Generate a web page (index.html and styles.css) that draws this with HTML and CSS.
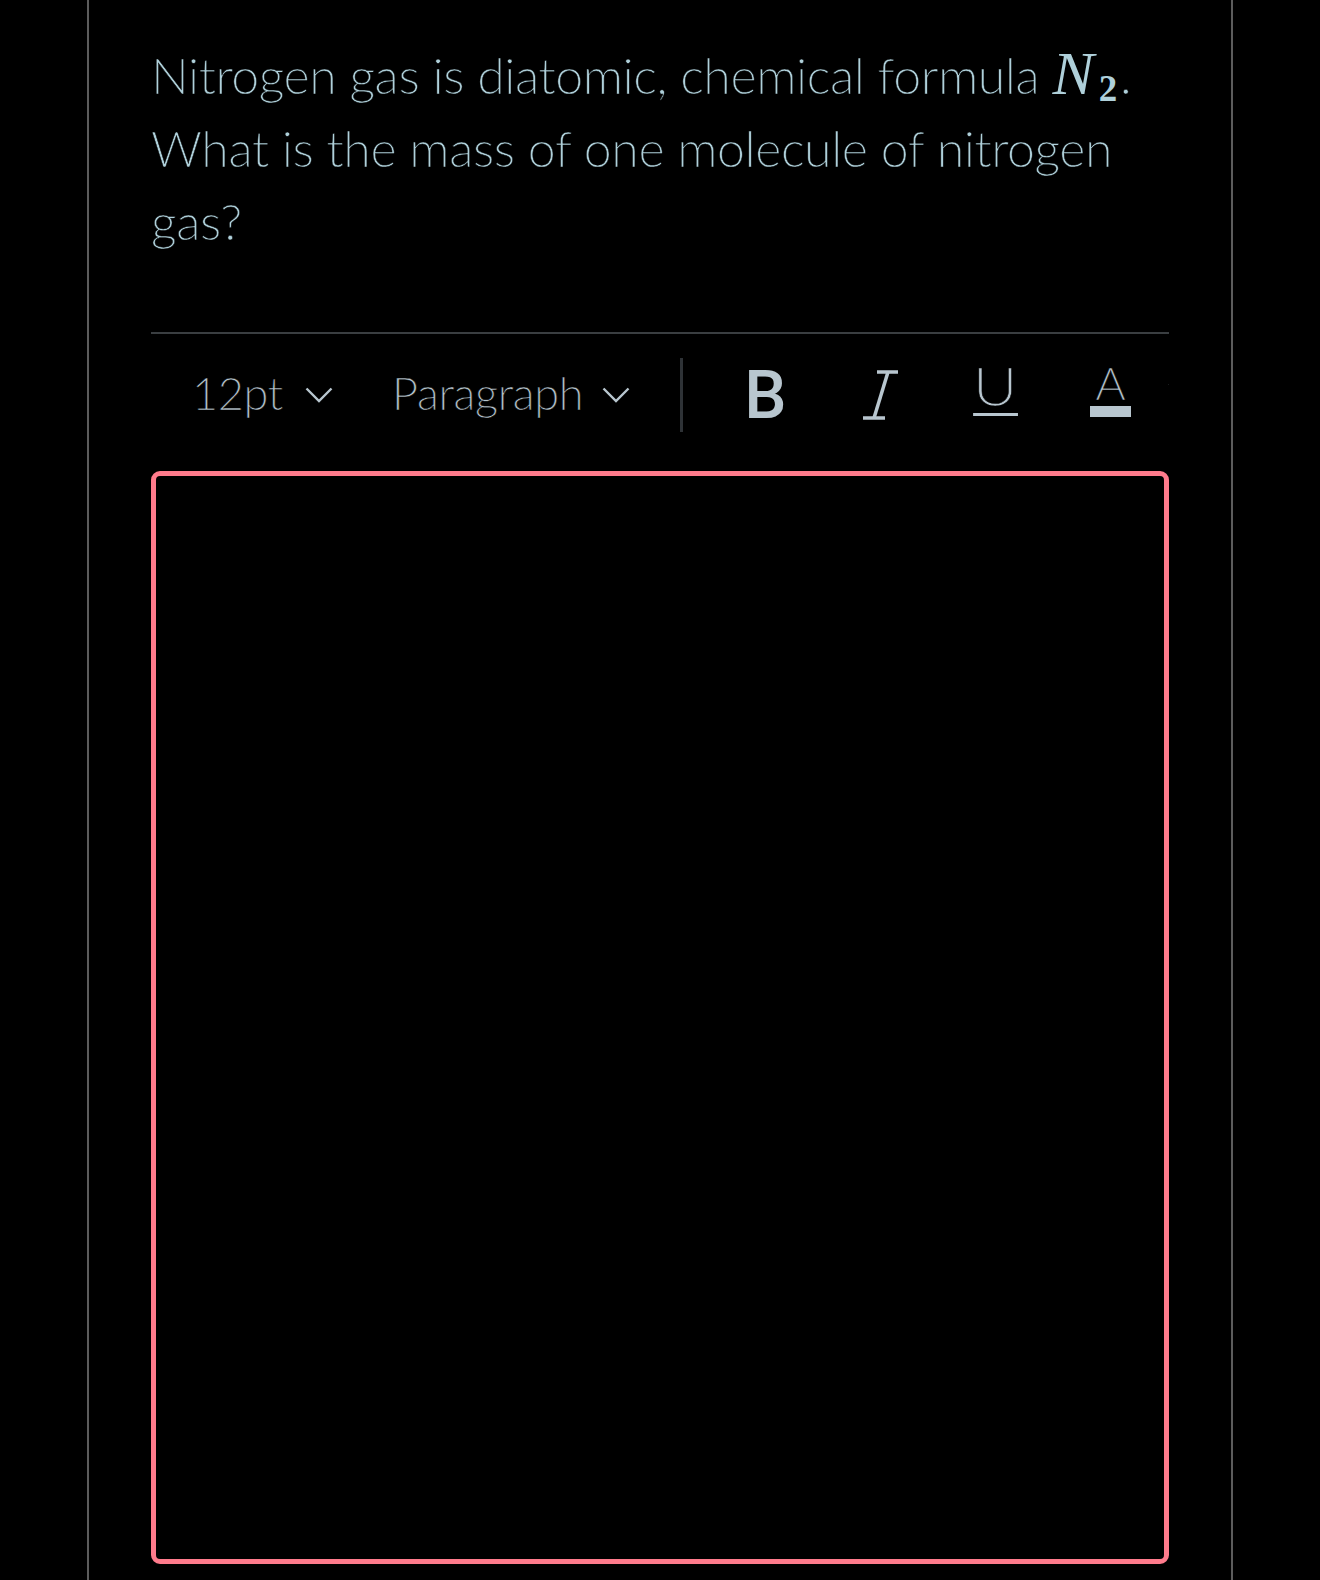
FILE: index.html
```html
<!DOCTYPE html>
<html lang="en">
<head>
  <meta charset="UTF-8">
  <meta name="viewport" content="width=device-width, initial-scale=1.0">
  <title>Question</title>
  <link rel="stylesheet" href="styles.css">
</head>
<body>
  <div class="page">
    <p class="question">Nitrogen gas is diatomic, chemical formula <span class="math"><i>N</i><sub>2</sub></span>. What is the mass of one molecule of nitrogen gas?</p>

    <div class="editor">
      <div class="toolbar">
        <div class="dd dd-size">
          <span>12pt</span>
          <svg class="chev" width="28" height="16" viewBox="0 0 28 16"><polyline points="1.5,1.5 14,14 26.5,1.5" /></svg>
        </div>
        <div class="dd dd-block">
          <span>Paragraph</span>
          <svg class="chev" width="28" height="16" viewBox="0 0 28 16"><polyline points="1.5,1.5 14,14 26.5,1.5" /></svg>
        </div>
        <div class="sep"></div>

        <div class="btn"><span class="ic-b">B</span></div>
        <div class="btn">
          <!-- italic icon -->
          <svg class="ic-i" width="36" height="50" viewBox="0 0 36 50">
            <line x1="14" y1="2" x2="35" y2="2" />
            <line x1="25" y1="2" x2="11" y2="48" />
            <line x1="0" y1="48" x2="22" y2="48" />
          </svg>
        </div>
        <div class="btn"><span class="ic-u">U</span></div>
        <div class="btn"><span class="ic-a">A</span></div>
        <svg class="chev chev-sm" width="28" height="16" viewBox="0 0 28 16"><polyline points="1.5,1.5 14,14 26.5,1.5" /></svg>
      </div>

      <div class="area"></div>
    </div>
  </div>
</body>
</html>
```

FILE: styles.css
```css
body {
  margin: 0;
  background: #000;
  font-family: Lato, "Open Sans", sans-serif;
}
.page {
  width: 1146px;
  min-height: 1580px;
  margin: 0 auto;
  padding: 37px 62px 18px;
  box-sizing: border-box;
  border-left: 2px solid #5c5c5c;
  border-right: 2px solid #5c5c5c;
}
.question {
  margin: 0;
  font-size: 50px;
  line-height: 73px;
  letter-spacing: -0.4px;
  font-weight: 300;
  color: #afd0da;
  -webkit-text-stroke: 0.5px #000;
}
.math i {
  font-family: "Liberation Serif", serif;
  font-size: 1.24em;
  letter-spacing: 0;
  margin-right: 5px;
  -webkit-text-stroke: 0;
}
.math sub {
  font-family: "Liberation Serif", serif;
  font-size: 0.74em;
  font-weight: bold;
  line-height: 0;
  vertical-align: -0.2em;
  margin-right: 3px;
  -webkit-text-stroke: 0;
}
.editor {
  margin-top: 74px;
}
.toolbar {
  display: flex;
  align-items: center;
  height: 122px;
  border-top: 2px solid #3a3e41;
  overflow: hidden;
  color: #b8c6cf;
}
.dd {
  flex: none;
  display: flex;
  align-items: center;
  justify-content: space-between;
  font-size: 45px;
  font-weight: 300;
  letter-spacing: -0.3px;
  -webkit-text-stroke: 0.5px #000;
}
.dd span {
  margin-top: -4px;
}
.dd-size {
  width: 141px;
  margin-left: 41px;
}
.dd-block {
  width: 238px;
  margin-left: 59px;
}
.chev polyline {
  fill: none;
  stroke: #b8c6cf;
  stroke-width: 2.4;
}
.sep {
  flex: none;
  width: 3px;
  height: 74px;
  background: #2e3236;
  margin-left: 50px;
  margin-right: 25px;
}
.btn {
  flex: none;
  width: 115px;
  display: flex;
  justify-content: center;
  align-items: center;
}
.ic-b {
  font-family: Roboto, sans-serif;
  font-weight: 500;
  font-size: 67px;
}
.ic-i line {
  stroke: #b8c6cf;
  stroke-width: 3.5;
}
.ic-u {
  display: inline-block;
  font-size: 53px;
  font-weight: 300;
  line-height: 0.85;
  padding-bottom: 5px;
  margin-bottom: 11px;
  border-bottom: 3px solid #b8c6cf;
  transform: scaleX(1.15);
  -webkit-text-stroke: 0.5px #000;
}
.ic-a {
  display: inline-block;
  font-size: 46px;
  font-weight: 300;
  line-height: 0.85;
  padding: 0 5px 3px;
  margin-bottom: 10px;
  border-bottom: 11px solid #b8c6cf;
  -webkit-text-stroke: 0.5px #000;
}
.chev-sm {
  flex: none;
  margin-top: -10px;
}
.area {
  margin-top: 15px;
  height: 1093px;
  box-sizing: border-box;
  border: 5px solid #ff7b8c;
  border-radius: 9px;
}
```
